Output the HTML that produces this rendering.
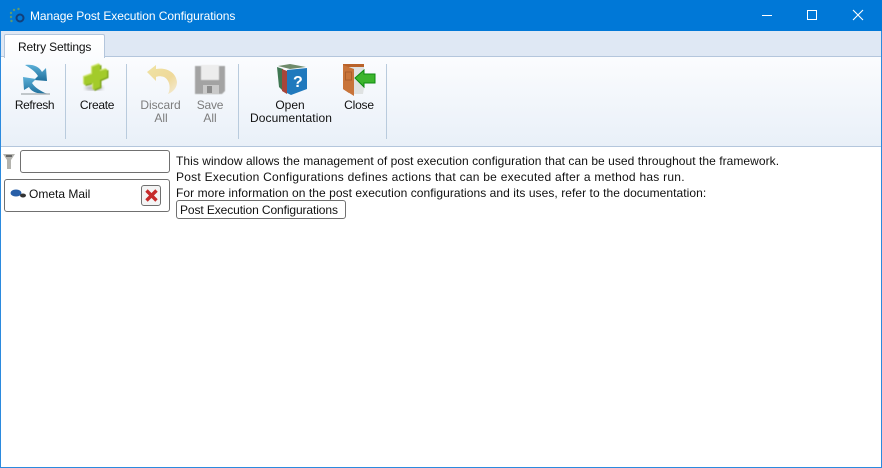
<!DOCTYPE html>
<html><head><meta charset="utf-8"><style>
html,body{margin:0;padding:0}
body{width:882px;height:468px;position:relative;overflow:hidden;background:#fff;font-family:"Liberation Sans",sans-serif;font-size:12px;color:#111}
.a{position:absolute}
.t{position:absolute;white-space:nowrap;line-height:14px}
.c{text-align:center;transform:translateX(-50%)}
.g{color:#7c7c7c}
.sep{position:absolute;top:64px;width:1px;height:75px;background:#b9cbdd}
svg{position:absolute;overflow:visible}
</style></head><body>
<div class="a" style="left:0;top:0;width:882px;height:31px;background:#0078d7"></div>
<div class="a" style="left:0;top:31px;width:882px;height:25px;background:#dfe8f4"></div>
<div class="a" style="left:1px;top:56px;width:880px;height:90px;background:linear-gradient(#fbfcfe,#e9f0f8);border-top:1px solid #b4c6dc;box-sizing:border-box;"></div>
<div class="a" style="left:1px;top:146px;width:880px;height:1px;background:#b4c6dc"></div>
<div class="a" style="left:0;top:31px;width:1px;height:437px;background:#2b8ade"></div>
<div class="a" style="left:881px;top:31px;width:1px;height:437px;background:#2b8ade"></div>
<div class="a" style="left:0;top:467px;width:882px;height:1px;background:#2b8ade"></div>

<svg style="left:9px;top:7px" width="18" height="16"><g fill="#5f9a72"><circle cx="2" cy="6" r="1.2"/><circle cx="2" cy="10" r="1.2"/><circle cx="2.500" cy="14" r="1.200"/><circle cx="5" cy="3" r="1.200"/><circle cx="9.500" cy="2" r="1.200"/></g><circle cx="11" cy="11" r="3.500" fill="none" stroke="#123f7a" stroke-width="2"/></svg>
<div class="t" style="left:30px;top:9px;color:#fff;letter-spacing:-.06px">Manage Post Execution Configurations</div>
<div class="a" style="left:762px;top:15px;width:10px;height:1px;background:#fff"></div>
<div class="a" style="left:807px;top:10px;border:1px solid #fff;width:8px;height:8px"></div>
<svg style="left:853px;top:10px" width="10" height="10"><path d="M0 0L10 10M10 0L0 10" stroke="#fff" stroke-width="1.100"/></svg>

<div class="a" style="left:4px;top:34px;width:101px;height:24px;background:linear-gradient(#fff,#fbfcfe);border:1px solid #b4c6dc;border-bottom:none;border-radius:2px 2px 0 0;box-sizing:border-box"></div>
<div class="t" style="left:18px;top:40px;letter-spacing:-.15px">Retry Settings</div>

<div class="sep" style="left:65px"></div><div class="sep" style="left:126px"></div><div class="sep" style="left:238px"></div><div class="sep" style="left:386px"></div>

<svg style="left:20px;top:63px" width="32" height="34">
<defs><linearGradient id="b" x1="0" y1="0" x2="0" y2="1"><stop offset="0" stop-color="#5cb0d8"/><stop offset="1" stop-color="#1f6f9c"/></linearGradient></defs>
<path d="M5 2C12 1 19 3 22 9L26 5L27 18L14 17L18 13C15 8 10 5 5 2Z" fill="url(#b)"/>
<path d="M27 31C20 31 12 30 9 24L4 27L3 14L16 16L12 20C15 25 21 28 27 31Z" fill="url(#b)"/>
<rect x="1" y="30" width="29" height="2" fill="#aab0b5" opacity=".7"/></svg>
<div class="t c" style="left:34.500px;top:98px;letter-spacing:-.4px">Refresh</div>

<svg style="left:83px;top:63px" width="28" height="30">
<defs><filter id="s"><feGaussianBlur stdDeviation=".4"/></filter><filter id="s2"><feGaussianBlur stdDeviation="1.500"/></filter></defs>
<ellipse cx="11" cy="25" rx="9" ry="2.500" fill="#777" opacity=".5" filter="url(#s2)"/>
<g filter="url(#s)">
<path transform="translate(1.500 1)" d="M9 4L17 1V8L24 6V14L17 17V24L10 27V20L1 22V14L9 11Z" fill="#7ea51c"/>
<path transform="translate(-1 -1)" d="M9 4L17 1V8L24 6V14L17 17V24L10 27V20L1 22V14L9 11Z" fill="#d2e76f"/>
<path d="M9 4L17 1V8L24 6V14L17 17V24L10 27V20L1 22V14L9 11Z" fill="#a3cb2b"/>
</g></svg>
<div class="t c" style="left:97px;top:98px;letter-spacing:-.3px">Create</div>

<svg style="left:146px;top:64px" width="32" height="30">
<defs><linearGradient id="u" x1="0" y1="0" x2="1" y2="1"><stop offset="0" stop-color="#efe3a4"/><stop offset=".6" stop-color="#efd99a"/><stop offset="1" stop-color="#f4ecd8"/></linearGradient></defs>
<path d="M1 8L10 1V5C20 3 30 8 31 18C31 24 27 28 22 30C25 25 24 16 18 13C15 12 12 12 10 13V17Z" fill="url(#u)"/></svg>
<div class="t c g" style="left:160.500px;top:98px;letter-spacing:-.05px">Discard</div><div class="t c g" style="left:161px;top:111px">All</div>

<svg style="left:195px;top:63px" width="32" height="32">
<path d="M0 3H30V28L27 31H0Z" fill="#a3a3a3" filter="url(#s)"/>
<rect x="6" y="2" width="18" height="15" fill="#ededed" filter="url(#s)"/>
<rect x="8" y="22" width="16" height="9" fill="#c9c9c9"/><rect x="12" y="23" width="5" height="7" fill="#8c8c8c"/></svg>
<div class="t c g" style="left:210px;top:98px;letter-spacing:-.2px">Save</div><div class="t c g" style="left:210px;top:111px">All</div>

<svg style="left:276px;top:63px" width="32" height="32">
<path d="M2 3L14 1L30 4L14 6Z" fill="#6e8a6a"/>
<path d="M1 4L7 6V28L3 24Z" fill="#3f7752"/>
<path d="M6 6L11 8V31L6 28Z" fill="#a8453a"/>
<path d="M11 7L31 5V26L15 32L11 30Z" fill="#2079bd"/>
<text x="17" y="24" font-family="Liberation Sans,sans-serif" font-weight="bold" font-size="16" fill="#fff">?</text></svg>
<div class="t c" style="left:290px;top:98px">Open</div><div class="t c" style="left:291px;top:111px;letter-spacing:.1px">Documentation</div>

<svg style="left:343px;top:63px" width="34" height="33">
<path d="M0 1H21V8H6V30L0 26Z" fill="#b9622a"/>
<path d="M6 4H21V25L20 31H8Z" fill="#dfe2e2"/>
<path d="M0 2L11 6V33L0 26Z" fill="#c8743a"/>
<rect x="2.500" y="9" width="6" height="8" fill="none" stroke="#a35826" opacity=".8"/>
<path d="M12 15L21 7V11H32V20H21V24Z" fill="#3cb52d" stroke="#0d8a10"/></svg>
<div class="t c" style="left:359px;top:98px;letter-spacing:-.2px">Close</div>

<svg style="left:3px;top:153px" width="12" height="17"><path d="M0 1H12L8 7V16H4V7Z" fill="#b3b3ae"/><rect x="3" y="2" width="6" height="2" fill="#666"/></svg>
<div class="a" style="left:20px;top:150px;width:150px;height:23px;border:1px solid #707070;border-radius:3px;box-sizing:border-box;background:#fff"></div>
<div class="a" style="left:4px;top:179px;width:166px;height:33px;border:1px solid #707070;border-radius:3px;box-sizing:border-box;background:#fff"></div>
<svg style="left:10px;top:189px" width="17" height="10"><ellipse cx="6" cy="4" rx="5.500" ry="3.500" fill="#285fa8"/><ellipse cx="13" cy="6.500" rx="3" ry="2" fill="#333"/></svg>
<div class="t" style="left:29px;top:187px">Ometa Mail</div>
<div class="a" style="left:141px;top:185px;width:20px;height:21px;border:1px solid #707070;border-radius:3px;box-sizing:border-box;background:#f4f4f4"></div>
<svg style="left:145px;top:189px" width="13" height="13"><path d="M1.500 1.500L11.500 11.500M11.500 1.500L1.500 11.500" stroke="#c62a2a" stroke-width="3.400"/></svg>

<div class="t" style="left:176px;top:154px;letter-spacing:.05px">This window allows the management of post execution configuration that can be used throughout the framework.</div>
<div class="t" style="left:176px;top:170px;letter-spacing:.25px">Post Execution Configurations defines actions that can be executed after a method has run.</div>
<div class="t" style="left:176px;top:186px;letter-spacing:.06px">For more information on the post execution configurations and its uses, refer to the documentation:</div>
<div class="a" style="left:176px;top:200px;width:170px;height:19px;border:1px solid #707070;border-radius:3px;box-sizing:border-box;background:#fff"></div>
<div class="t" style="left:180px;top:203px;letter-spacing:-.1px">Post Execution Configurations</div>
</body></html>
